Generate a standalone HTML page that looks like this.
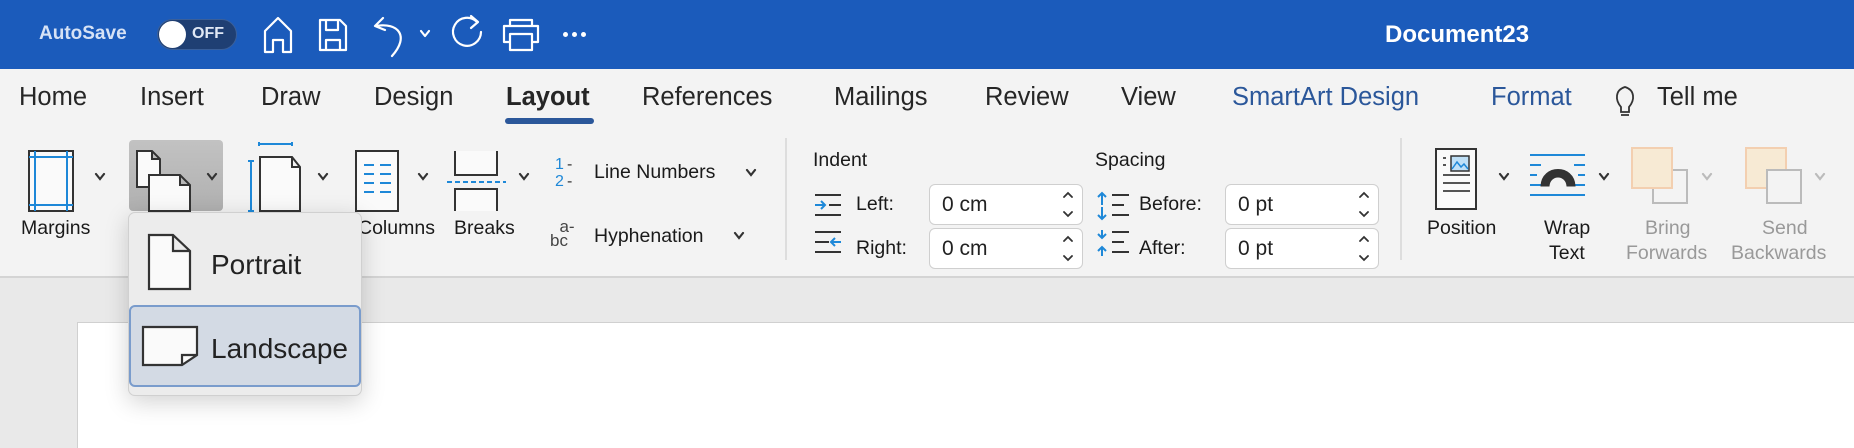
<!DOCTYPE html>
<html><head><meta charset="utf-8"><style>
*{margin:0;padding:0;box-sizing:border-box}
body{width:1854px;height:448px;overflow:hidden;background:#e9e9e9;font-family:"Liberation Sans",sans-serif;position:relative;color:#222}
.a{position:absolute}
.t{position:absolute;white-space:nowrap;line-height:1}
.tab{font-size:25.5px;top:85px;color:#262626}
.lbl{font-size:19.5px;color:#1a1a1a}
svg.o{position:absolute;left:0;top:0;width:1854px;height:448px}
.box{position:absolute;background:#fff;border:1px solid #cfcfcf;border-radius:6px;font-size:21px;padding-left:12px;line-height:40px}
</style></head><body>
<div class="a" style="left:0;top:0;width:1854px;height:69px;background:#1b5bbb"></div>
<div class="t" style="left:39px;top:24px;font-size:19px;font-weight:bold;color:#d6e2f5">AutoSave</div>
<div class="a" style="left:157px;top:19px;width:80px;height:31px;border-radius:16px;background:#1f3f73;border:1px solid #3a5f99"></div>
<div class="a" style="left:159px;top:21px;width:27px;height:27px;border-radius:50%;background:#fff"></div>
<div class="t" style="left:192px;top:26px;font-size:16px;font-weight:bold;color:#e0e8f5">OFF</div>
<div class="a" style="left:563px;top:32px;width:5px;height:5px;border-radius:50%;background:#fff;box-shadow:9px 0 #fff,18px 0 #fff"></div>
<div class="t" style="left:1385px;top:23px;font-size:24px;font-weight:bold;color:#fff">Document23</div>

<div class="a" style="left:0;top:69px;width:1854px;height:209px;background:#f3f3f3;border-bottom:2px solid #d4d4d4"></div>
<div class="t tab" style="left:19px">Home</div>
<div class="t tab" style="left:140px">Insert</div>
<div class="t tab" style="left:261px">Draw</div>
<div class="t tab" style="left:374px">Design</div>
<div class="t tab" style="left:506px;font-weight:bold">Layout</div>
<div class="a" style="left:505px;top:118px;width:89px;height:6px;border-radius:3px;background:#2b579a"></div>
<div class="t tab" style="left:642px">References</div>
<div class="t tab" style="left:834px">Mailings</div>
<div class="t tab" style="left:985px">Review</div>
<div class="t tab" style="left:1121px">View</div>
<div class="t tab" style="left:1232px;color:#2b579a">SmartArt Design</div>
<div class="t tab" style="left:1491px;color:#2b579a">Format</div>
<div class="t tab" style="left:1657px">Tell me</div>

<div class="a" style="left:129px;top:140px;width:94px;height:71px;border-radius:4px;background:linear-gradient(#c2c2c2,#b0b0b0)"></div>

<div class="t lbl" style="left:21px;top:219px">Margins</div>
<div class="t lbl" style="left:358px;top:219px">Columns</div>
<div class="t lbl" style="left:454px;top:219px">Breaks</div>
<div class="t" style="left:555px;top:156px;font-size:16px;color:#1e88d8;line-height:17px">1<br>2</div>
<div class="t" style="left:567px;top:156px;font-size:16px;color:#333;line-height:17px">-<br>-</div>
<div class="t lbl" style="left:594px;top:163px">Line Numbers</div>
<div class="t" style="left:550px;top:220px;font-size:17px;color:#444;line-height:14px">&nbsp;&nbsp;a-<br>bc</div>
<div class="t lbl" style="left:594px;top:227px">Hyphenation</div>
<div class="a" style="left:785px;top:138px;width:2px;height:122px;background:#ddd"></div>
<div class="a" style="left:1400px;top:138px;width:2px;height:122px;background:#ddd"></div>
<div class="t lbl" style="left:813px;top:151px">Indent</div>
<div class="t lbl" style="left:1095px;top:151px">Spacing</div>
<div class="t lbl" style="left:856px;top:195px">Left:</div>
<div class="t lbl" style="left:856px;top:239px">Right:</div>
<div class="t lbl" style="left:1139px;top:195px">Before:</div>
<div class="t lbl" style="left:1139px;top:239px">After:</div>
<div class="box" style="left:929px;top:184px;width:154px;height:41px">0 cm</div>
<div class="box" style="left:929px;top:228px;width:154px;height:41px">0 cm</div>
<div class="box" style="left:1225px;top:184px;width:154px;height:41px">0 pt</div>
<div class="box" style="left:1225px;top:228px;width:154px;height:41px">0 pt</div>
<div class="t lbl" style="left:1427px;top:219px">Position</div>
<div class="t lbl" style="left:1544px;top:219px">Wrap</div>
<div class="t lbl" style="left:1549px;top:244px">Text</div>
<div class="t lbl" style="left:1645px;top:219px;color:#999">Bring</div>
<div class="t lbl" style="left:1626px;top:244px;color:#999">Forwards</div>
<div class="t lbl" style="left:1762px;top:219px;color:#999">Send</div>
<div class="t lbl" style="left:1731px;top:244px;color:#999">Backwards</div>

<svg class="o" viewBox="0 0 1854 448" fill="none" stroke-width="2">
<g stroke="#fff" stroke-width="2.2" stroke-linejoin="round" stroke-linecap="round">
<path d="M265 52V31L278 18L291 31V52H283V40H273V52Z"/>
<path d="M320 20H340L346 26V50H320Z M326 20V30H338V20 M326 50V40H340V50"/>
<path d="M383 18L375 26L385 30 M376 26C398 22 410 36 392 56"/>
<path d="M421 31L425 36L429 31"/>
<path d="M477 22A14 14 0 1 0 481 32 M471 16L478 22L471 28"/>
<path d="M510 26V20H532V26 M504 26H538V42H532 M510 42H504V26 M510 34H532V50H510Z"/>
</g>
<path d="M1621 107C1615 100 1615 90 1625 87C1635 90 1635 100 1629 107V112H1621Z M1621 115H1629" stroke="#333" stroke-width="1.8"/>
<rect x="29" y="151" width="44" height="60" fill="#fafafa" stroke="#333"/>
<path d="M35 151V211 M67 151V211 M29 157H73 M29 205H73" stroke="#1e88d8"/>
<path d="M137 151H152L160 159V187H137Z M152 151V159H160" stroke="#333" fill="#fafafa"/>
<path d="M149 175H180L190 185V211H149Z M180 175V185H190" stroke="#333" fill="#fafafa"/>
<path d="M260 157H292L300 167V211H260Z M292 157V167H300" stroke="#333" fill="#fafafa"/>
<path d="M259 146V142 M259 144H292 M292 142V146 M251 161V211 M248 161H254 M248 211H254" stroke="#1e88d8"/>
<rect x="356" y="151" width="42" height="60" fill="#fafafa" stroke="#333"/>
<path d="M364 165H374 M380 165H391 M364 174H374 M380 174H391 M364 183H374 M380 183H391 M364 192H374 M380 192H391" stroke="#1e88d8"/>
<path d="M455 151V175H497V151 M455 211V189H497V211" stroke="#333" fill="#fafafa"/>
<path d="M447 182H506" stroke="#1e88d8" stroke-dasharray="5 3"/>
<g stroke="#333" stroke-width="2.2" stroke-linecap="round">
<path d="M96 174L100 179L104 174 M208 174L212 179L216 174 M319 174L323 179L327 174 M419 174L423 179L427 174 M520 174L524 179L528 174 M747 170L751 175L755 170 M735 233L739 238L743 233 M1500 174L1504 179L1508 174 M1600 174L1604 179L1608 174"/>
</g>
<g stroke="#bbb" stroke-width="2.2" stroke-linecap="round"><path d="M1703 174L1707 179L1711 174 M1816 174L1820 179L1824 174"/></g>
<rect x="1436" y="149" width="40" height="60" fill="#fafafa" stroke="#333"/>
<rect x="1451" y="156" width="18" height="15" fill="#bfe0f7" stroke="#333" stroke-width="1.5"/>
<path d="M1452 169L1457 162L1461 167L1464 164L1468 169" stroke="#1e88d8" stroke-width="1.5"/>
<path d="M1443 158H1446 M1443 165H1446 M1443 175H1470 M1443 183H1470 M1443 191H1470" stroke="#555"/>
<path d="M1530 155H1585 M1530 165H1541 M1574 165H1585 M1530 175H1537 M1578 175H1585 M1530 185H1541 M1574 185H1585 M1530 195H1585" stroke="#1e88d8"/>
<path d="M1541 186C1542 164 1574 164 1575 186H1567C1566 174 1550 174 1549 186Z" fill="#333" stroke="#333" stroke-width="1"/>
<rect x="1653" y="170" width="34" height="33" fill="#f3f3f3" stroke="#bbb"/>
<rect x="1632" y="148" width="40" height="40" fill="#f7ead4" stroke="#f3cfb0"/>
<rect x="1746" y="148" width="40" height="40" fill="#f7ead4" stroke="#f3cfb0"/>
<rect x="1767" y="170" width="34" height="33" fill="#f3f3f3" stroke="#bbb"/>
<g stroke="#333" stroke-width="2"><path d="M815 195H841 M829 205H841 M815 215H841 M815 232H841 M815 242H829 M815 252H841 M1112 195H1129 M1112 205H1124 M1112 215H1129 M1112 232H1129 M1112 242H1124 M1112 252H1129"/></g>
<g stroke="#1e88d8" stroke-width="2"><path d="M815 205H825 M821 201L825 205L821 209 M841 242H831 M835 238L831 242L835 246 M1102 205V193 M1098 197L1102 193L1106 197 M1102 207V219 M1098 215L1102 219L1106 215 M1102 230V238 M1098 234L1102 238L1106 234 M1102 256V247 M1098 251L1102 247L1106 251"/></g>
<g stroke="#333" stroke-width="1.8" stroke-linecap="round">
<path d="M1064 197L1068 193L1072 197 M1064 212L1068 216L1072 212 M1064 241L1068 237L1072 241 M1064 256L1068 260L1072 256 M1360 197L1364 193L1368 197 M1360 212L1364 216L1368 212 M1360 241L1364 237L1368 241 M1360 256L1364 260L1368 256"/>
</g>
</svg>

<div class="a" style="left:77px;top:322px;width:1777px;height:126px;background:#fff;border-left:1px solid #d0d0d0;border-top:1px solid #d0d0d0"></div>

<div class="a" style="left:128px;top:212px;width:234px;height:184px;background:#ececec;border:1px solid #d0d0d0;border-radius:7px;box-shadow:0 6px 24px rgba(0,0,0,.18)"></div>
<div class="a" style="left:129px;top:305px;width:232px;height:82px;background:#d3dae4;border:2px solid #7a9ccc;border-radius:6px"></div>
<svg class="o" viewBox="0 0 1854 448" fill="#fafafa" stroke="#333" stroke-width="2.2">
<path d="M149 235H173L190 251V289H149Z M173 235V251H190"/>
<path d="M143 327H197V355L182 365H143Z M182 365V355H197"/>
</svg>
<div class="t" style="left:211px;top:251px;font-size:28px;color:#222">Portrait</div>
<div class="t" style="left:211px;top:335px;font-size:28px;color:#222">Landscape</div>
</body></html>
